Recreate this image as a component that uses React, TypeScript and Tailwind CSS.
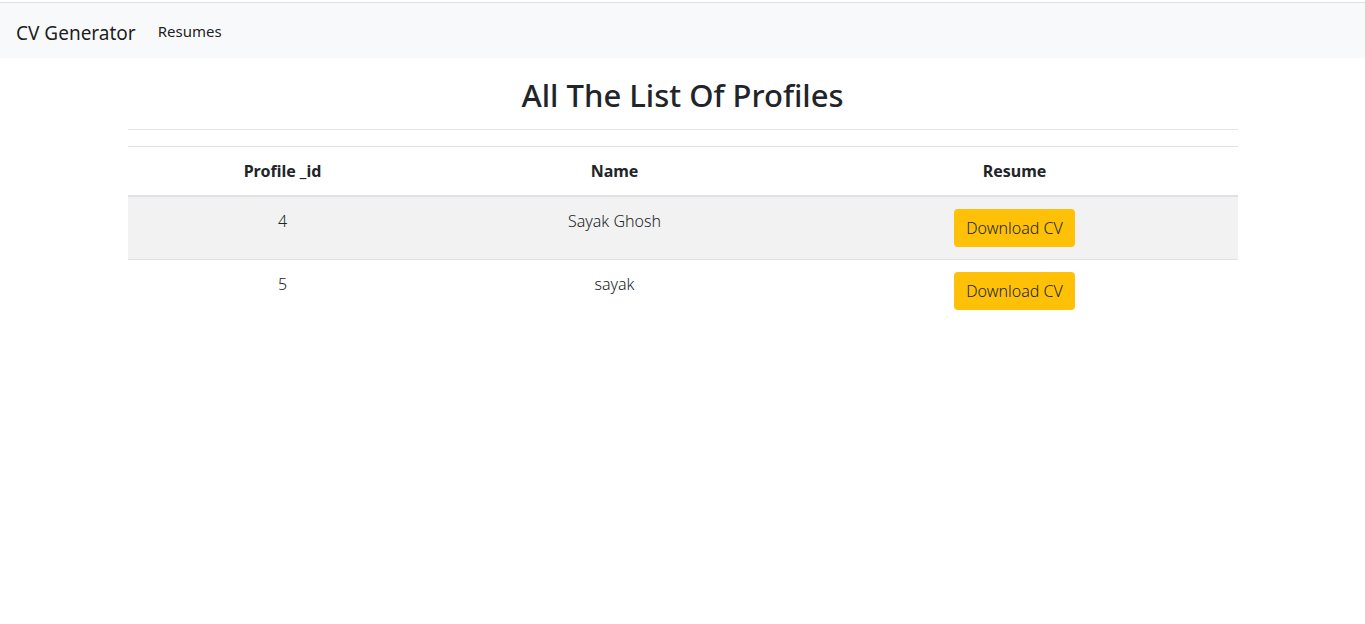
const profiles = [
  { id: 4, name: "Sayak Ghosh" },
  { id: 5, name: "sayak" },
];

export default function App() {
  return (
    <div
      className="min-h-screen bg-white text-[#212529]"
      style={{ fontFamily: '"Noto Sans", "Open Sans", sans-serif' }}
    >
      {/* Navbar */}
      <nav className="mt-[2px] flex h-[56px] items-center border-t border-[#dee2e6] bg-[#f8f9fa] px-4">
        <a href="#" className="mt-[4px] mr-[22px] text-[19px] leading-[30px] text-black/90">
          CV Generator
        </a>
        <a href="#" className="text-[15px] leading-6 text-black/90">
          Resumes
        </a>
      </nav>

      <div className="mx-auto w-[1110px]">
        <h2 className="mt-[18px] text-center text-[31px] leading-[38px] font-medium">
          All The List Of Profiles
        </h2>
        <hr className="mt-[15px] border-t border-black/10" />

        <table className="mt-4 w-full border-collapse text-center text-base leading-6">
          <thead>
            <tr>
              <th className="w-[310px] border-t border-b-2 border-[#dee2e6] p-3 font-bold">
                Profile _id
              </th>
              <th className="w-[354px] border-t border-b-2 border-[#dee2e6] p-3 font-bold">
                Name
              </th>
              <th className="border-t border-b-2 border-[#dee2e6] p-3 font-bold">
                Resume
              </th>
            </tr>
          </thead>
          <tbody>
            {profiles.map((p, i) => (
              <tr
                key={p.id}
                className={i % 2 === 0 ? "bg-black/5" : "border-t border-[#dee2e6]"}
              >
                <td className="h-[62px] p-3 align-top font-light">{p.id}</td>
                <td className="h-[62px] p-3 align-top font-light">{p.name}</td>
                <td className="h-[62px] p-3 align-top">
                  <button className="h-[38px] rounded bg-[#ffc107] px-3 text-base leading-6 font-light text-[#212529]">
                    Download CV
                  </button>
                </td>
              </tr>
            ))}
          </tbody>
        </table>
      </div>
    </div>
  );
}
